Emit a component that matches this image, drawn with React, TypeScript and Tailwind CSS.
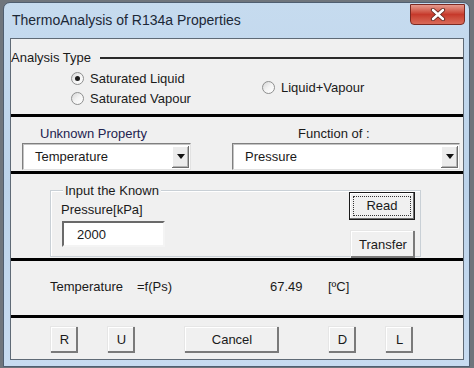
import React from "react";

const font = { fontFamily: '"Liberation Sans", Arial, sans-serif' };

function Radio(props: { label: string; checked?: boolean }) {
  return (
    <div className="flex items-center h-[20px]">
      <div className="w-[13px] h-[13px] rounded-full border border-[#8e8f8f] bg-gradient-to-br from-[#d6d6d6] via-[#f4f4f4] to-[#ffffff] flex items-center justify-center shrink-0">
        {props.checked && <div className="w-[5px] h-[5px] rounded-full bg-[#1c1c1c]" />}
      </div>
      <span className="ml-[6px] text-[13px] leading-[15px] text-[#1a1a1a]">{props.label}</span>
    </div>
  );
}

function Combo(props: { value: string; width: string }) {
  return (
    <div
      className={`${props.width} h-[27px] bg-white border border-t-[#7f7f7f] border-l-[#7f7f7f] border-r-[#e2e2e2] border-b-[#e2e2e2] shadow-[inset_1px_1px_#c4c4c4] flex items-center justify-between`}
    >
      <span className="ml-[12px] text-[13px] leading-[15px] text-[#1a1a1a]">{props.value}</span>
      <div className="w-[17px] h-[22px] mr-[1px] bg-[#ececec] shadow-[inset_-1px_-1px_#6e6e6e,inset_1px_1px_#ffffff,inset_-2px_-2px_#b4b4b4] flex items-center justify-center">
        <svg width="8" height="5" viewBox="0 0 8 5">
          <path d="M0 0 L8 0 L4 5 Z" fill="#111" />
        </svg>
      </div>
    </div>
  );
}

function Btn(props: { label: string; className: string; focus?: boolean }) {
  if (props.focus) {
    return (
      <div className={`${props.className} border border-[#1a1a1a] bg-[#f0f0f0] shadow-[inset_-1px_-1px_#6e6e6e,inset_1px_1px_#ffffff] p-[3px]`}>
        <div className="w-full h-full border border-dotted border-[#333] flex items-center justify-center text-[13px] text-[#1a1a1a]">
          {props.label}
        </div>
      </div>
    );
  }
  return (
    <div
      className={`${props.className} bg-[#f0f0f0] shadow-[inset_-2px_-2px_#7a7a7a,inset_1px_1px_#ffffff,inset_-1px_-1px_#5a5a5a] border-l border-t border-[#e6e6e6] flex items-center justify-center text-[13px] text-[#1a1a1a]`}
    >
      {props.label}
    </div>
  );
}

export default function App() {
  return (
    <div className="w-[474px] h-[368px] bg-[#6f757c] overflow-hidden" style={font}>
      <div className="mt-[2px] ml-[3px] w-[467px] border border-[#4f5e70] rounded-t-[7px] bg-gradient-to-b from-[#c6dbef] via-[#bcd3ea] to-[#c7dbf0]">
        {/* title bar */}
        <div className="h-[35px] flex justify-between">
          <div className="pl-[8px] mt-[9px] h-[17px] leading-[17px] text-[14px] text-[#1c2836]">
            ThermoAnalysis of R134a Properties
          </div>
          <div className="mt-[1px] mr-[4px] w-[55px] h-[21px] rounded-b-[4px] border border-[#7a2a22] bg-gradient-to-b from-[#e59a8e] via-[#c6392b] to-[#d96a58] flex items-center justify-center">
            <svg width="16" height="13" viewBox="0 0 16 13">
              <path d="M3 2 L13 11 M13 2 L3 11" stroke="#5a2019" strokeWidth="4.2" strokeLinecap="round" />
              <path d="M3 2 L13 11 M13 2 L3 11" stroke="#ffffff" strokeWidth="2.6" strokeLinecap="round" />
            </svg>
          </div>
        </div>

        {/* client area */}
        <div className="ml-[6px] w-[454px] border border-[#5f6a76] bg-[#f0f0f0] text-[#1a1a1a]">
          {/* analysis type */}
          <div className="h-[78px] border-b-[3px] border-black pt-[11px]">
            <div className="flex items-center h-[15px]">
              <span className="text-[13px] leading-[15px]">Analysis Type</span>
              <div className="ml-[9px] flex-1 h-[2px] bg-[#2a2a2a]" />
            </div>
            <div className="flex pt-[3px]">
              <div className="pl-[60px] w-[251px]">
                <Radio label="Saturated Liquid" checked />
                <Radio label="Saturated Vapour" />
              </div>
              <div className="pt-[9px]">
                <Radio label="Liquid+Vapour" />
              </div>
            </div>
          </div>

          {/* unknown property */}
          <div className="h-[57px] border-b-[3px] border-black flex">
            <div className="ml-[11px] w-[169px]">
              <div className="mt-[9px] h-[15px] leading-[15px] pl-[18px] text-[13px] text-[#23234f]">Unknown Property</div>
              <div className="mt-[2px]">
                <Combo value="Temperature" width="w-[169px]" />
              </div>
            </div>
            <div className="ml-[41px] w-[228px]">
              <div className="mt-[9px] h-[15px] leading-[15px] pl-[66px] text-[13px]">Function of :</div>
              <div className="mt-[2px]">
                <Combo value="Pressure" width="w-[228px]" />
              </div>
            </div>
          </div>

          {/* input the known */}
          <div className="h-[87px] border-b-[3px] border-black overflow-hidden pt-[16px]">
            <div className="relative ml-[39px] w-[371px] h-[67px] border border-[#c9d0d6] shadow-[inset_1px_1px_#ffffff] flex justify-between">
              <span className="absolute -top-[8px] left-[12px] px-[2px] bg-[#f0f0f0] text-[13px] leading-[15px]">
                Input the Known
              </span>
              <div className="pl-[10px]">
                <div className="mt-[11px] h-[15px] leading-[15px] text-[13px]">Pressure[kPa]</div>
                <div className="mt-[4px] ml-[1px] w-[103px] h-[26px] bg-white border-2 border-t-[#6a6a6a] border-l-[#6a6a6a] border-r-[#f4f4f4] border-b-[#f4f4f4] flex items-center">
                  <span className="ml-[13px] text-[13px] leading-[15px]">2000</span>
                </div>
              </div>
              <div className="pr-[5px] flex flex-col items-end">
                <div className="mt-[1px]">
                  <Btn label="Read" className="w-[66px] h-[28px]" focus />
                </div>
                <div className="mt-[10px]">
                  <Btn label="Transfer" className="w-[65px] h-[28px]" />
                </div>
              </div>
            </div>
          </div>

          {/* result */}
          <div className="h-[57px] border-b-[3px] border-black">
            <div className="flex pt-[18px] pl-[39px] text-[13px] leading-[15px]">
              <span className="w-[87px]">Temperature</span>
              <span className="w-[133px]">=f(Ps)</span>
              <span className="w-[58px]">67.49</span>
              <span>[ºC]</span>
            </div>
          </div>

          {/* buttons */}
          <div className="h-[41px] flex pt-[8px] pl-[39px]">
            <Btn label="R" className="w-[28px] h-[27px]" />
            <div className="ml-[29px]"><Btn label="U" className="w-[28px] h-[27px]" /></div>
            <div className="ml-[49px]"><Btn label="Cancel" className="w-[95px] h-[27px]" /></div>
            <div className="ml-[49px]"><Btn label="D" className="w-[28px] h-[27px]" /></div>
            <div className="ml-[29px]"><Btn label="L" className="w-[28px] h-[27px]" /></div>
          </div>
        </div>
        <div className="h-[6px]" />
      </div>
    </div>
  );
}
